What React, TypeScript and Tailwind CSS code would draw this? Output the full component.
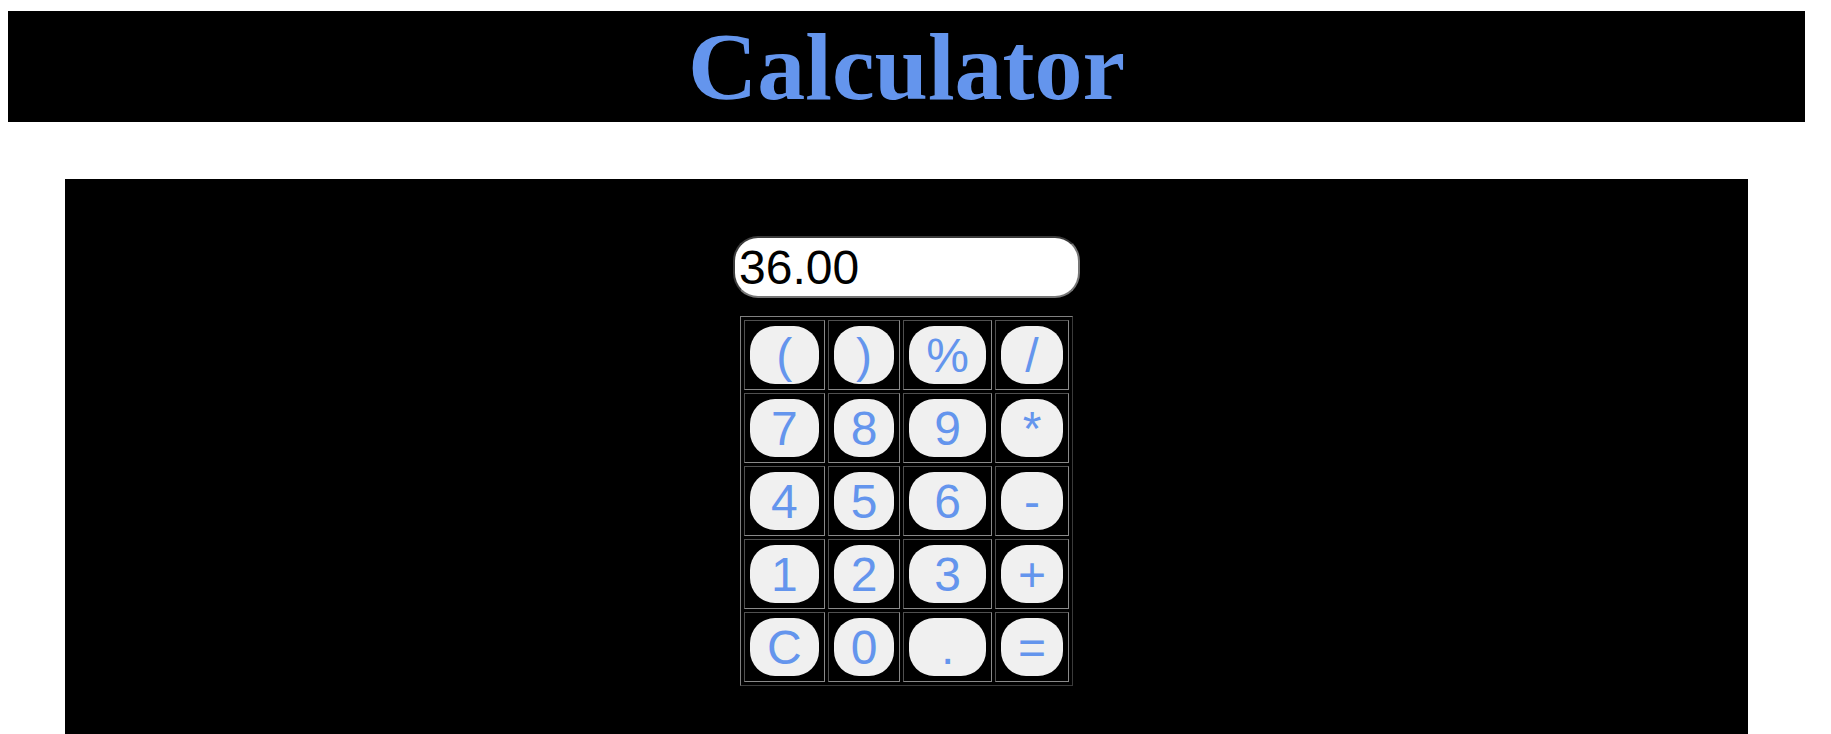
import { useState } from "react";

const keys: string[][] = [
  ["(", ")", "%", "/"],
  ["7", "8", "9", "*"],
  ["4", "5", "6", "-"],
  ["1", "2", "3", "+"],
  ["C", "0", ".", "="],
];

function evaluate(expr: string): string {
  try {
    const cleaned = expr.replace(/%/g, "/100");
    // eslint-disable-next-line no-new-func
    const result = Function(`"use strict"; return (${cleaned});`)();
    if (typeof result !== "number" || !isFinite(result)) return "Error";
    return result.toFixed(2);
  } catch {
    return "Error";
  }
}

export default function App() {
  const [display, setDisplay] = useState("36.00");

  const press = (key: string) => {
    if (key === "C") {
      setDisplay("");
    } else if (key === "=") {
      setDisplay(evaluate(display));
    } else {
      setDisplay((prev) => (prev === "Error" ? key : prev + key));
    }
  };

  return (
    <div className="min-h-screen bg-white pl-2 pt-[11px]">
      <div className="w-[1797px]">
        <div className="h-[111px] bg-black text-center">
          <h1 className="font-['Liberation_Serif','Times_New_Roman',serif] text-[96px] font-bold leading-[111px] text-[#6495ED]">
            Calculator
          </h1>
        </div>

        <div className="mx-[57px] mt-[57px] bg-black pb-[60px] pt-[57px]">
          <input
            type="text"
            value={display}
            onChange={(e) => setDisplay(e.target.value)}
            className="mx-auto block h-[62px] w-[347px] rounded-[25px] border-2 border-b-[#767676] border-l-[#3b3b3b] border-r-[#767676] border-t-[#3b3b3b] bg-white pl-[4px] font-['Liberation_Sans',Arial,sans-serif] text-[48px] leading-[55px] text-black outline-none"
          />

          <table className="mx-auto mt-[18px] border-separate border-spacing-[3px] border border-b-[#3a3a3a] border-l-[#808080] border-r-[#3a3a3a] border-t-[#808080]">
            <tbody>
              {keys.map((row, i) => (
                <tr key={i}>
                  {row.map((key) => (
                    <td
                      key={key}
                      className="border border-b-[#8a8a8a] border-l-[#505050] border-r-[#8a8a8a] border-t-[#505050] p-[5px]"
                    >
                      <button
                        type="button"
                        onClick={() => press(key)}
                        className="block h-[58px] w-full cursor-pointer rounded-[25px] bg-[#f0f0f0] px-[17px] pt-[1px] font-['Liberation_Sans',Arial,sans-serif] text-[48px] leading-[55px] text-[#6495ED]"
                      >
                        {key}
                      </button>
                    </td>
                  ))}
                </tr>
              ))}
            </tbody>
          </table>
        </div>
      </div>
    </div>
  );
}
